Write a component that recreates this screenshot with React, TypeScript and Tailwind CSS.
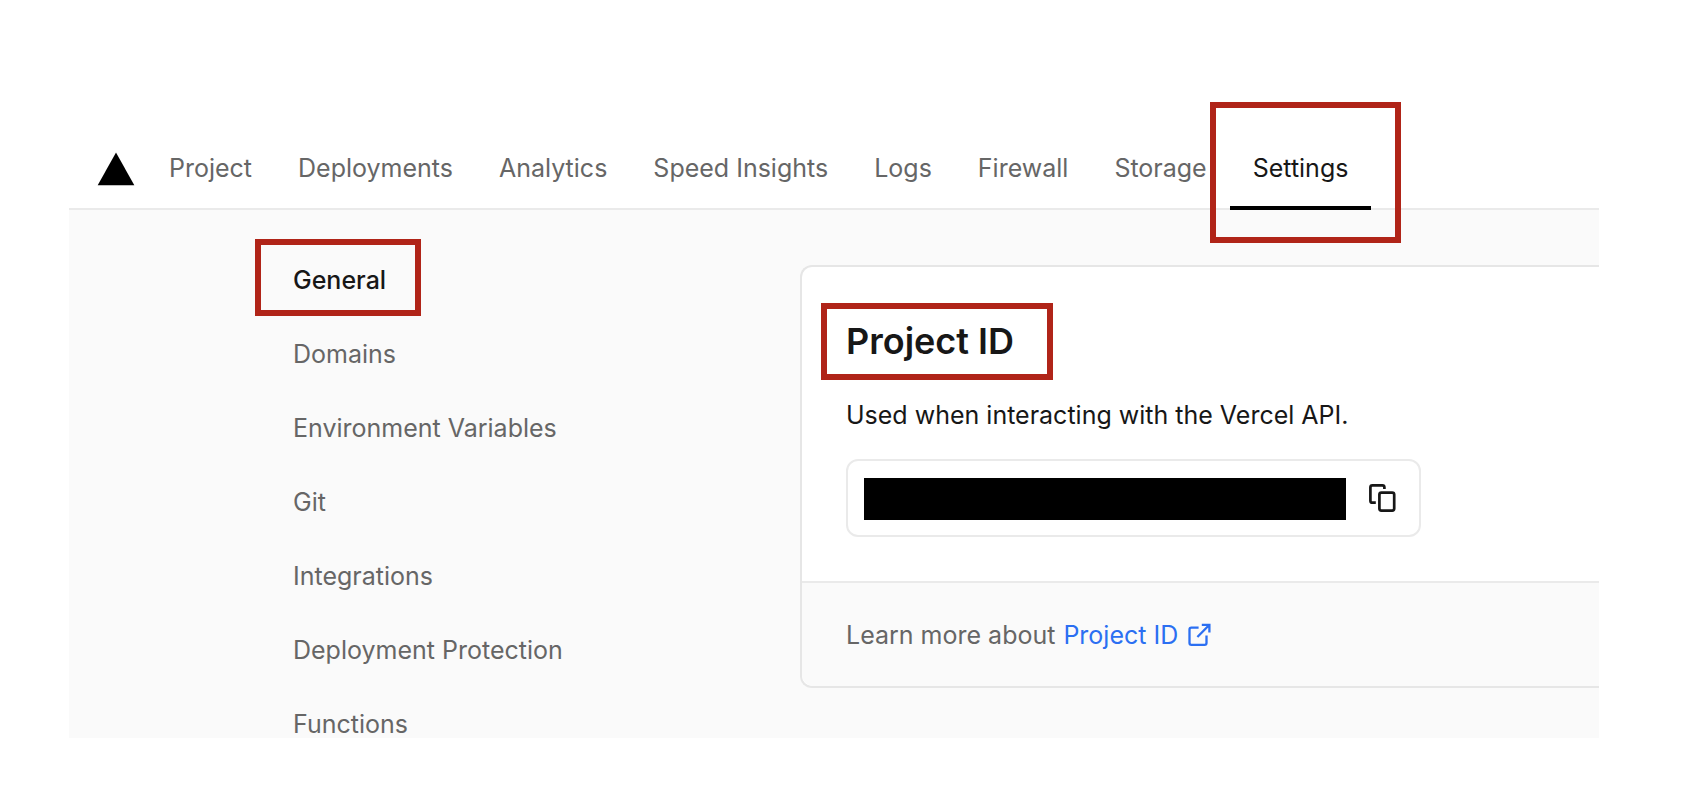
const tabs = ['Project', 'Deployments', 'Analytics', 'Speed Insights', 'Logs', 'Firewall', 'Storage'];

const sections = [
  'Domains',
  'Environment Variables',
  'Git',
  'Integrations',
  'Deployment Protection',
  'Functions',
];

function Logo() {
  return (
    <svg viewBox="0 0 38 34" className="h-[34px] w-[38px]" aria-hidden="true">
      <path d="M19 0.5 37.3 33.2H0.7Z" fill="#000" />
    </svg>
  );
}

function CopyIcon() {
  return (
    <svg viewBox="0 0 27 28" className="h-7 w-[27px]" fill="none" stroke="#171717" strokeWidth="2.7" aria-hidden="true">
      <path d="M6.8 18.7H3.4Q1.4 18.7 1.4 16.7V3.4Q1.4 1.4 3.4 1.4H13.4Q15.4 1.4 15.4 3.4V4.9" />
      <rect x="10.4" y="8.6" width="14.8" height="18" rx="2" />
    </svg>
  );
}

function ExternalIcon() {
  return (
    <svg viewBox="0 0 23 24" className="h-6 w-[23px]" fill="none" stroke="#2b6ff2" strokeWidth="2.3" aria-hidden="true">
      <path d="M10.6 4.7H3.4Q1.5 4.7 1.5 6.6V19.9Q1.5 21.8 3.4 21.8H16.6Q18.5 21.8 18.5 19.9V12.6" />
      <path d="M13.8 1.9H21.4V9.6M21.2 2 9.4 14" />
    </svg>
  );
}

export default function App() {
  return (
    <div className="min-h-[794px] bg-white pr-[101px] pl-[69px] font-['Inter',sans-serif] text-[25px] leading-8 text-[#666]">
      <header className="flex items-end border-b-2 border-[#eaeaea] pt-[104px] pl-7">
        <div className="mb-[22px]">
          <Logo />
        </div>
        <nav className="-mb-0.5 flex pl-[11px]">
          {tabs.map((tab) => (
            <a key={tab} href="#" className="px-[23px] pt-12 pb-[26px] whitespace-nowrap">
              {tab}
            </a>
          ))}
          <a
            href="#"
            aria-current="page"
            className="relative border-b-4 border-black px-[23px] pt-12 pb-[22px] text-[#171717]"
          >
            Settings
            <span className="absolute -top-0.5 -right-[30px] -bottom-[37px] -left-5 z-10 border-6 border-[#b02418]" />
          </a>
        </nav>
      </header>

      <main className="flex h-[528px] overflow-hidden bg-[#fafafa]">
        <aside className="w-[731px] shrink-0 pt-[29px] pl-[186px]">
          <ul>
            <li className="h-[99px]">
              <a
                href="#"
                aria-current="page"
                className="inline-block h-[77px] w-[166px] border-6 border-[#b02418] pt-[19px] pl-8 font-medium text-[#171717]"
              >
                General
              </a>
            </li>
            {sections.map((section) => (
              <li key={section} className="h-[74px] pl-[38px]">
                <a href="#">{section}</a>
              </li>
            ))}
          </ul>
        </aside>

        <section className="mt-[55px] h-[423px] min-w-0 grow rounded-l-xl border-2 border-r-0 border-[#e6e6e6] bg-white">
          <div className="h-[314px] pt-9 pl-[19px]">
            <h2 className="h-[77px] w-[232px] border-6 border-[#b02418] pt-3 pl-[19px] text-[36px] leading-10 font-semibold text-[#171717]">
              Project ID
            </h2>
            <div className="pl-[25px]">
              <p className="mt-[19px] whitespace-nowrap text-[#171717]">Used when interacting with the Vercel API.</p>
              <div className="mt-7 flex h-[78px] w-[575px] items-start rounded-xl border-2 border-[#eaeaea] pt-[17px] pl-4">
                <span className="h-[42px] w-[482px] bg-black" />
                <button type="button" aria-label="Copy project ID" className="mt-1.5 ml-[23px]">
                  <CopyIcon />
                </button>
              </div>
            </div>
          </div>
          <footer className="flex h-[105px] items-center gap-2 rounded-bl-xl border-t-2 border-[#eaeaea] bg-[#fafafa] pl-11 whitespace-nowrap">
            <span>Learn more about</span>
            <a href="#" className="flex items-center gap-[10px] text-[#2b6ff2]">
              Project ID
              <ExternalIcon />
            </a>
          </footer>
        </section>
      </main>
    </div>
  );
}
